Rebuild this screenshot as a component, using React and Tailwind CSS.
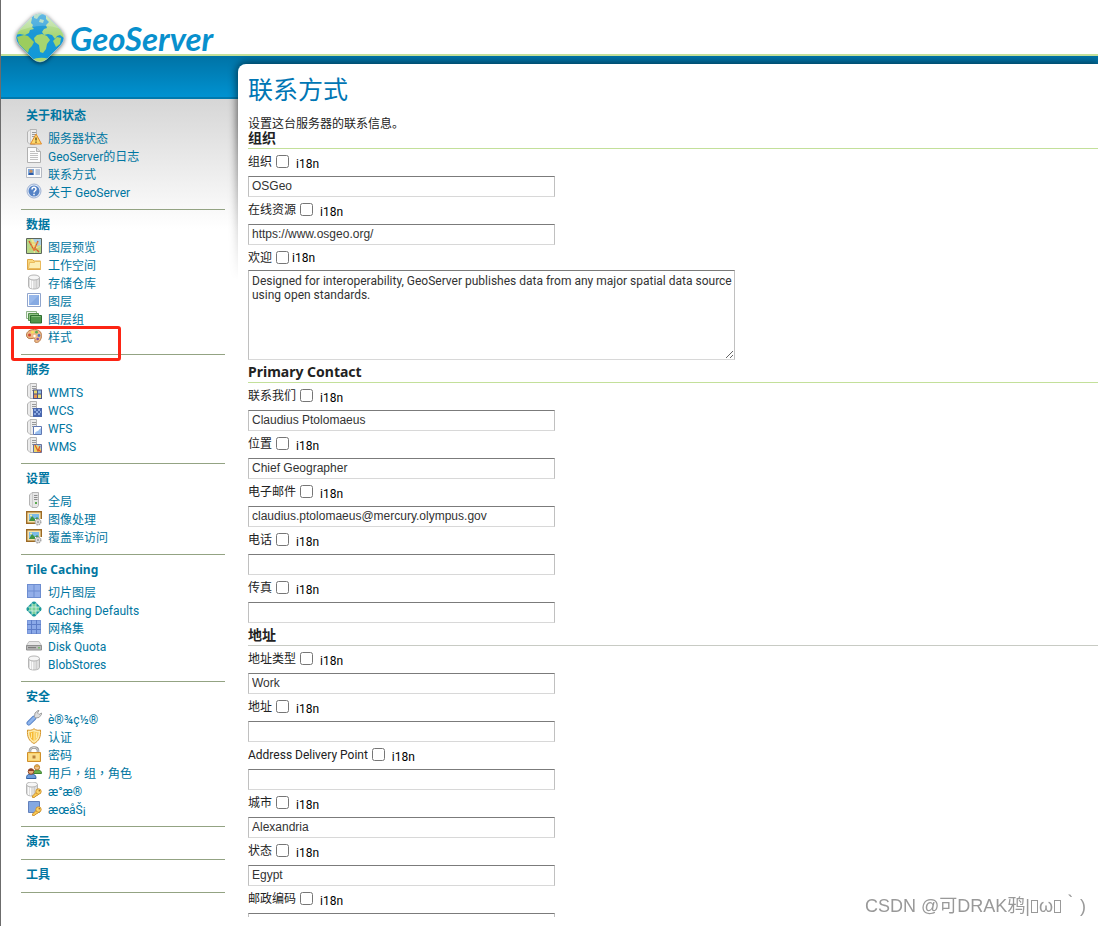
import React, { useState } from 'react';

const MENU = [
  {
    title: '关于和状态',
    items: [
      { label: '服务器状态', icon: 'serverWarn' },
      { label: 'GeoServer的日志', icon: 'page' },
      { label: '联系方式', icon: 'vcard' },
      { label: '关于 GeoServer', icon: 'help' },
    ],
  },
  {
    title: '数据',
    items: [
      { label: '图层预览', icon: 'map' },
      { label: '工作空间', icon: 'folder' },
      { label: '存储仓库', icon: 'database' },
      { label: '图层', icon: 'layer' },
      { label: '图层组', icon: 'layers' },
      { label: '样式', icon: 'palette', marked: true },
    ],
  },
  {
    title: '服务',
    items: [
      { label: 'WMTS', icon: 'wmts' },
      { label: 'WCS', icon: 'wcs' },
      { label: 'WFS', icon: 'wfs' },
      { label: 'WMS', icon: 'wms' },
    ],
  },
  {
    title: '设置',
    items: [
      { label: '全局', icon: 'server' },
      { label: '图像处理', icon: 'picture' },
      { label: '覆盖率访问', icon: 'picture' },
    ],
  },
  {
    title: 'Tile Caching',
    items: [
      { label: '切片图层', icon: 'tiles' },
      { label: 'Caching Defaults', icon: 'globe' },
      { label: '网格集', icon: 'grid' },
      { label: 'Disk Quota', icon: 'drive' },
      { label: 'BlobStores', icon: 'database' },
    ],
  },
  {
    title: '安全',
    items: [
      { label: 'è®¾ç½®', icon: 'wrench' },
      { label: '认证', icon: 'shield' },
      { label: '密码', icon: 'lock' },
      { label: '用户，组，角色', icon: 'users', lang: 'zh-TW' },
      { label: 'æ°æ®', icon: 'databaseKey' },
      { label: 'æœåŠ¡', icon: 'layerKey' },
    ],
  },
  { title: '演示', items: [] },
  { title: '工具', items: [] },
];

const SECTIONS = [
  {
    title: '组织',
    fields: [
      { name: 'organization', label: '组织', value: 'OSGeo' },
      { name: 'onlineResource', label: '在线资源', value: 'https://www.osgeo.org/' },
      {
        name: 'welcome',
        label: '欢迎',
        multiline: true,
        value:
          'Designed for interoperability, GeoServer publishes data from any major spatial data source using open standards.',
      },
    ],
  },
  {
    title: 'Primary Contact',
    fields: [
      { name: 'person', label: '联系我们', value: 'Claudius Ptolomaeus' },
      { name: 'position', label: '位置', value: 'Chief Geographer' },
      { name: 'email', label: '电子邮件', value: 'claudius.ptolomaeus@mercury.olympus.gov' },
      { name: 'phone', label: '电话', value: '' },
      { name: 'fax', label: '传真', value: '' },
    ],
  },
  {
    title: '地址',
    plain: true,
    fields: [
      { name: 'addressType', label: '地址类型', value: 'Work' },
      { name: 'address', label: '地址', value: '' },
      { name: 'deliveryPoint', label: 'Address Delivery Point', value: '' },
      { name: 'city', label: '城市', value: 'Alexandria' },
      { name: 'state', label: '状态', value: 'Egypt' },
      { name: 'zip', label: '邮政编码', value: '' },
    ],
  },
];

const serverBody = (
  <>
    <path d="M1.500 3 4 .5h6.500v13L9 15.500H4L1.500 13z" fill="#ececec" stroke="#b4b4b4" />
    <path d="M4.500 1v14" stroke="#cfcfcf" />
    <path d="M6 3.500h4M6 5.500h4M6 7.500h4" stroke="#9a9a9a" />
  </>
);

const cylinder = (
  <>
    <path d="M2.500 3.500v9c0 1.200 2.200 2.500 5.500 2.500s5.500-1.300 5.500-2.500v-9z" fill="#dedede" stroke="#b5b5b5" />
    <path d="M4.500 6v8M6.500 6.500v8" stroke="#fafafa" />
    <path d="M10.500 6v8" stroke="#cdcdcd" />
    <ellipse cx="8" cy="3.500" rx="5.500" ry="2.500" fill="#f6f6f6" stroke="#b5b5b5" />
  </>
);

const key = (
  <>
    <path d="m10.500 10-4 4v1.500h2l.5-1h1l.5-1h1l1.500-1.500" fill="#f8c955" stroke="#c88620" strokeWidth=".8" />
    <circle cx="12.500" cy="9.500" r="2.700" fill="#fbd36a" stroke="#c88620" strokeWidth=".8" />
    <circle cx="13.300" cy="8.700" r=".8" fill="#9c651a" />
  </>
);

const ICONS = {
  server: (
    <>
      <path d="M3.500 3 6 .5h6.500v13L11 15.500H6L3.500 13z" fill="#e6e6e6" stroke="#b4b4b4" />
      <path d="M6.500 1v14" stroke="#cccccc" />
      <path d="M8 3.500h3.500M8 5.500h3.500M8 7.500h3.500" stroke="#8b8b8b" />
      <path d="M9 10h2v2H9z" fill="#58a94e" />
    </>
  ),
  serverWarn: (
    <>
      {serverBody}
      <path d="m10 5 5.500 10h-11z" fill="#fdd86b" stroke="#e08a2c" strokeLinejoin="round" />
      <path d="M10 8.500v3M10 12.500v1.200" stroke="#5b4210" strokeWidth="1.300" />
    </>
  ),
  page: (
    <>
      <path d="M1.500.5h9l4 4v11h-13z" fill="#fcfcfc" stroke="#b0b0b0" />
      <path d="M10.500.5v4h4" fill="#e2e2e2" stroke="#b0b0b0" />
      <path d="M4 4.500h5M4 6.500h8M4 8.500h8M4 10.500h8M4 12.500h8" stroke="#c0c0c0" />
    </>
  ),
  vcard: (
    <>
      <path d="M.5 2.500h15v10H.5z" fill="#fbfbfb" stroke="#b5b9c2" />
      <path d="M2 4h6v6H2z" fill="#7fa9dd" />
      <path d="M2.500 10c0-2 1.200-2.500 2.500-2.500S7.500 8 7.500 10z" fill="#2d5ca8" />
      <circle cx="5" cy="6.200" r="1.600" fill="#c98f5c" />
      <path d="M9.500 5h4.500M9.500 7h4.500M9.500 9h4.500" stroke="#7690bb" />
    </>
  ),
  help: (
    <>
      <circle cx="8" cy="8" r="7" fill="#dfe8f6" stroke="#9fb2d3" />
      <circle cx="8" cy="8" r="5.500" fill="#5583c6" />
      <path d="M6 6.500C6 3.500 10.200 3.700 10 6.300 9.900 7.800 8 7.800 8 9.500M8 10.700v1.500" fill="none" stroke="#fff" strokeWidth="1.500" />
    </>
  ),
  map: (
    <>
      <path d="M1 1h14v14H1z" fill="#efe393" />
      <path d="M7 1h8v6l-4 2z" fill="#a8cee4" />
      <path d="M1 1h4l3 14H1zM9 11l6-3v7H9z" fill="#b7d888" />
      <path d="m3 3 5 9 2-1 3 3M8 12l4-9" fill="none" stroke="#d9532b" strokeWidth="1.400" />
      <path d="M4 5h9M5 8h9M3 11h11" stroke="#e9c34b" strokeWidth=".7" />
      <path d="M.5.5h15v15H.5z" fill="none" stroke="#5d665b" />
    </>
  ),
  folder: (
    <>
      <path d="M1.500 13.500v-10h5l1.500 1.500h6.500v8.500z" fill="#f9d77d" stroke="#dfa745" />
      <path d="M3.500 6.500h5l1-1h5v7h-12z" fill="#fdeeb3" stroke="#eabb5e" />
    </>
  ),
  database: cylinder,
  layer: (
    <>
      <path d="M1.500 1.500h13v13h-13z" fill="#fff" stroke="#91a5cc" />
      <path d="M3 3h10v10H3z" fill="#86aae2" />
      <path d="M3 13V3h10z" fill="#98b8ea" />
    </>
  ),
  layers: (
    <>
      <path d="M.5 1.500h10v7H.5z" fill="#eef5ec" stroke="#8fb388" />
      <path d="M2.500 3.500h10v7h-10z" fill="#8fc283" stroke="#558f4b" />
      <path d="M4.500 5.500h11v7.500h-11z" fill="#51964b" stroke="#2f6f31" />
      <path d="M5.500 6.500h9" stroke="#86bd79" />
    </>
  ),
  palette: (
    <>
      <path d="M.5 7C.5 3.500 4 1.500 8.500 1.500s7 2.500 7 6-2 7-5 7c-2 0-2-1.500-1.500-2.500.5-1.500-1-2-3-1.500C3 11.200.5 10 .5 7z" fill="#edb987" stroke="#b87a4a" />
      <circle cx="3.500" cy="7" r="1.500" fill="#d24a32" />
      <circle cx="6.500" cy="4.200" r="1.400" fill="#f4e25a" />
      <circle cx="10.500" cy="4.200" r="1.400" fill="#5cae4e" />
      <circle cx="13" cy="7.500" r="1.400" fill="#4c79c8" />
      <circle cx="8.500" cy="8" r="1.200" fill="#fff" />
      <circle cx="11.700" cy="11" r="1.300" fill="#8452a6" />
    </>
  ),
  wmts: (
    <>
      {serverBody}
      <path d="M7 6.500h9V16H7z" fill="#4b5488" />
      <path d="M8 7.500h3v3H8z" fill="#e9d66a" />
      <path d="M12 7.500h3v3h-3z" fill="#8fbde4" />
      <path d="M8 11.500h3V15H8z" fill="#e39252" />
      <path d="M12 11.500h3V15h-3z" fill="#e8dd77" />
    </>
  ),
  wcs: (
    <>
      {serverBody}
      <path d="M7 7h9v9H7z" fill="#4a67ae" />
      <path d="M8 8h2v2H8zM12 8h2v2h-2zM10 10h2v2h-2zM14 10h1v2h-1zM8 12h2v2H8zM12 12h2v2h-2z" fill="#8ba9e0" />
    </>
  ),
  wfs: (
    <>
      {serverBody}
      <path d="M7.500 7.500h8v8h-8z" fill="#fff" stroke="#6079b4" />
      <path d="M9 15c0-3 3-2.500 4-4 .5-1 1-1.500 2-1.500V15z" fill="#9cc0ee" />
    </>
  ),
  wms: (
    <>
      {serverBody}
      <path d="M7.500 7.500h8v8h-8z" fill="#ecd768" stroke="#68719c" />
      <path d="M11 8h4v4z" fill="#9cc9e8" />
      <path d="m9 8 3 6 2-5M13 13l2 2" fill="none" stroke="#dc5b2b" strokeWidth="1.200" />
    </>
  ),
  picture: (
    <>
      <path d="M.7 1.700h14.600v11.600H.7z" fill="#f7e2ab" stroke="#9c6a25" strokeWidth="1.400" />
      <path d="M3 4h10v7H3z" fill="#7dbbe8" />
      <path d="m3 11 3-5 3 3 2-2 2 2v2z" fill="#3f9443" />
      <circle cx="5" cy="5.500" r="1" fill="#fff3a0" />
      <path d="M9 9h7v7H9z" fill="#fff" />
      <circle cx="12" cy="12" r="2.800" fill="#e3e3e3" stroke="#a5a5a5" strokeWidth="1.400" strokeDasharray="1.500 .7" />
      <circle cx="12" cy="12" r="1" fill="#999" />
    </>
  ),
  tiles: (
    <>
      <path d="M1 1h14v14H1z" fill="#6d8dd0" />
      <path d="M2 2h5.500v5.500H2zM8.500 2H14v5.500H8.500zM2 8.500h5.500V14H2zM8.500 8.500H14V14H8.500z" fill="#93afe9" />
    </>
  ),
  globe: (
    <>
      <path d="M6.700.8Q8 0 9.300.8l5.900 5.900q.8 1.300 0 2.600l-5.900 5.900q-1.300.8-2.600 0L.8 9.300Q0 8 .8 6.700z" fill="#1c9a9a" />
      <path d="M6 3h4v3h3v4h-3v3H6v-3H3V6h3z" fill="#7bd19b" />
      <path d="M6 2v12M10 2v12M2 6h12M2 10h12" stroke="#d5f3ea" strokeWidth=".8" />
    </>
  ),
  grid: (
    <>
      <path d="M1 1h14v14H1z" fill="#8ba9e8" />
      <path d="M1.500 1.500h13v13h-13z" fill="none" stroke="#7895d8" />
      <path d="M5.500 1v14M10.500 1v14M1 5.500h14M1 10.500h14" stroke="#5d7dc8" />
    </>
  ),
  drive: (
    <>
      <path d="m3 4.500-2.500 4h15L13 4.500z" fill="#e7e7e7" stroke="#c0c0c0" />
      <path d="M.5 8.500h15v4.500H.5z" fill="#b9b9b9" stroke="#8f8f8f" />
      <path d="M2 10.700h8" stroke="#6e6e6e" />
      <path d="M12 10.700h2" stroke="#75b96a" strokeWidth="1.400" />
    </>
  ),
  wrench: (
    <>
      <path d="M2.800 13.200 8 8" stroke="#5480c6" strokeWidth="4.600" strokeLinecap="round" />
      <path d="M2.800 13.200 8 8" stroke="#8fb5ec" strokeWidth="2.800" strokeLinecap="round" />
      <path d="m8.500 6.500.5-3.500 3-2.500h1l-1.500 2.500 1.500 1.500L15.500 3v1.500L13 7.500l-3.500.5z" fill="#dedede" stroke="#a0a0a0" />
    </>
  ),
  shield: (
    <>
      <path d="M8 .7C6 2.500 3.500 2.500 1.500 2 1 9 3 13 8 15.500 13 13 15 9 14.500 2 12.500 2.500 10 2.500 8 .7z" fill="#fdebae" stroke="#d6962d" />
      <path d="M8 3C6.500 4 5 4.300 3.300 4.200 3.300 8.500 5 11.500 8 13.300z" fill="#f6b832" />
      <path d="M8 3c1.500 1 3 1.300 4.700 1.200 0 4.300-1.700 7.300-4.700 9.100z" fill="#f9ce60" />
      <path d="M8 3v10M5.500 5v5M10.500 5v5" stroke="#fff0b7" strokeWidth=".8" />
    </>
  ),
  lock: (
    <>
      <path d="M4 7V4.500C4 .5 12 .5 12 4.500V7" fill="none" stroke="#969696" strokeWidth="2.600" />
      <path d="M4 7V4.500C4 .5 12 .5 12 4.500V7" fill="none" stroke="#dadada" />
      <path d="M1.500 6.500h13v9h-13z" fill="#fbd36c" stroke="#cf8f2c" />
      <path d="M3 9h10M3 11h10M3 13h10" stroke="#fbe9ae" />
      <path d="M6.500 9.500h3v3h-3z" fill="#b9823a" />
    </>
  ),
  users: (
    <>
      <path d="M7.500 9.500C7.500 6.500 9 6 11.500 6s4 1 4 3.500z" fill="#69b14c" stroke="#3f8430" />
      <circle cx="11" cy="3.300" r="2.600" fill="#f0c28a" stroke="#b77a37" />
      <path d="M8.500 3C9 .3 13 .3 13.600 3z" fill="#dba646" />
      <path d="M.5 14.500c0-3.500 1.500-4.500 4.500-4.500s5 1 5 4.500z" fill="#6d9fe0" stroke="#315f9f" />
      <circle cx="5" cy="7.500" r="2.800" fill="#e9ad7b" stroke="#8f4a2b" />
      <path d="M2.200 7C2.500 4 7.500 4 7.900 7z" fill="#8d3d25" />
    </>
  ),
  databaseKey: (
    <>
      <g transform="translate(-2 -1)">{cylinder}</g>
      {key}
    </>
  ),
  layerKey: (
    <>
      <path d="M2.500 1.500h11v11h-11z" fill="#84a8e2" stroke="#6280bb" />
      {key}
    </>
  ),
};

function Icon({ name }) {
  return (
    <svg className="mb-1 h-4 w-4 shrink-0" viewBox="0 0 16 16" fill="none" aria-hidden="true">
      {ICONS[name]}
    </svg>
  );
}

function LogoMark() {
  return (
    <svg className="h-[54px] w-[54px] shrink-0 drop-shadow-[0_1px_2px_rgba(0,0,0,0.6)]" viewBox="0 0 54 54" aria-hidden="true">
      <defs>
        <linearGradient id="sea" x1="0" y1="0" x2="0" y2="1">
          <stop offset="0" stopColor="#3fa9dc" />
          <stop offset="0.4" stopColor="#1b97d6" />
          <stop offset="1" stopColor="#0f9ad8" />
        </linearGradient>
        <linearGradient id="land" x1="0" y1="0" x2="0" y2="1">
          <stop offset="0" stopColor="#c3e3b4" />
          <stop offset="1" stopColor="#a3d56c" />
        </linearGradient>
        <clipPath id="diamond">
          <path d="M20 5q7-5 14 0l14 14q6 8 0 15L34 48q-7 6-14 0L6 34q-6-7 0-15z" />
        </clipPath>
      </defs>
      <g clipPath="url(#diamond)">
        <path d="M0 0h54v54H0z" fill="url(#sea)" />
        <path d="M2 24 16 6l3 1-1 5 2 2-1 2 2 2-4 1-1 3-4 2-5-1z" fill="url(#land)" />
        <path d="m4 26 7-2 4 1 3 3 3 3-2 4-3 3-1 4-9-9z" fill="#9ccd5e" />
        <path d="m21 3 5-2 3 2-3 2-2 3-3-1zM27 8l4 1-1 3-4-1z" fill="#a9d9bd" />
        <path d="m33 4 18 18v5l-4-3-3 1-2 3-3-4-4-1-4 1-2-3 2-3 3-1-1-3 3-3-3-3z" fill="url(#land)" />
        <path d="m21 27 3-3 5-1 5 2 3 4-3 4-1 5-3 4-3-1-1-7-4-3z" fill="#a5d570" />
        <path d="m40 30 4-4 4 1-1 6-4 3z" fill="#a3d56c" />
        <path d="M18 49q9-4 18-1l-8 8z" fill="#a8d86f" />
        <path d="M2 22 20 4q7-5 14 0l14 14Q26 10 2 22z" fill="#fff" opacity=".2" />
      </g>
      <path
        d="M20 5q7-5 14 0l14 14q6 8 0 15L34 48q-7 6-14 0L6 34q-6-7 0-15z"
        fill="none"
        stroke="#fff"
        strokeOpacity=".35"
      />
    </svg>
  );
}

function MenuGroup({ group }) {
  return (
    <section className="ml-5 mr-[13px] border-b border-[#93a383] pb-2 pl-[5px] pt-[5px]">
      <h2 className="mb-px h-[18px] font-['Noto_Sans','Noto_Sans_CJK_SC',sans-serif] text-[12px] font-bold leading-5 text-[#0076a1]">
        {group.title}
      </h2>
      {group.items.length > 0 && (
        <ul className="pt-1">
          {group.items.map((item) => (
            <li key={item.label} className="relative h-[18px]">
              <a
                href="#"
                lang={item.lang}
                className="flex items-center gap-1.5 text-[12px] leading-[18px] text-[#0076a1]"
              >
                <Icon name={item.icon} />
                {item.label}
              </a>
              {item.marked && (
                <span className="pointer-events-none absolute -left-[15px] -top-0.5 h-[35px] w-[110px] rounded-[3px] border-3 border-[#fc2414]" />
              )}
            </li>
          ))}
        </ul>
      )}
    </section>
  );
}

function Field({ field }) {
  const [value, setValue] = useState(field.value);
  const [i18n, setI18n] = useState(false);
  const control =
    'block border border-t-[#7b7b7b] border-l-[#c0c0c0] border-r-[#c0c0c0] border-b-[#d8d8d8] bg-white pl-[3px] text-[12px] text-[#333]';

  return (
    <div>
      <div className={field.multiline ? 'flex h-[25px] items-center' : 'flex h-[27px] items-center pb-0.5'}>
        <label htmlFor={field.name}>{field.label}</label>
        <input
          id={`${field.name}-i18n`}
          type="checkbox"
          className="ml-1 h-[13px] w-[13px]"
          checked={i18n}
          onChange={(event) => setI18n(event.target.checked)}
        />
        <label
          htmlFor={`${field.name}-i18n`}
          className={field.multiline ? 'ml-[3px] text-black' : 'ml-[7px] pt-1 text-black'}
        >
          i18n
        </label>
      </div>
      {field.multiline ? (
        <textarea
          id={field.name}
          className={`${control} h-[90px] w-[487px] py-[3px] leading-[14px]`}
          value={value}
          onChange={(event) => setValue(event.target.value)}
        />
      ) : (
        <input
          id={field.name}
          type="text"
          className={`${control} h-[21px] w-[307px] pb-px font-['Liberation_Sans',sans-serif]`}
          value={value}
          onChange={(event) => setValue(event.target.value)}
        />
      )}
    </div>
  );
}

export default function App() {
  return (
    <div className="flex h-screen flex-col overflow-hidden border-l border-[#6c6c6c] bg-white pb-[9px] font-['Roboto','Noto_Sans_CJK_SC',sans-serif] text-[12px] leading-4 text-[#222]">
      <header className="h-14 shrink-0 border-b-2 border-[#c3e09a]">
        <a href="#" className="relative z-10 flex w-fit items-center pl-3 pt-[11px]">
          <LogoMark />
          <span className="ml-[3px] font-['Lato',sans-serif] text-[33px] font-bold italic leading-[52px] text-[#0890cd]">
            GeoServer
          </span>
        </a>
      </header>

      <div className="flex min-h-0 flex-1 bg-[linear-gradient(#0073a6,#0093d2)] bg-[length:100%_42px] bg-no-repeat">
        <nav className="w-[237px] shrink-0 pt-[41px]">
          <div className="border-t-2 border-[#0079ad] bg-[linear-gradient(#d6d6d6,#fff_130px)] pt-0.5">
            {MENU.map((group) => (
              <MenuGroup key={group.title} group={group} />
            ))}
          </div>
        </nav>

        <main className="relative mt-2 min-w-0 flex-1">
          {/* panel shadow, fades out down the left edge */}
          <div className="pointer-events-none absolute -left-3 -top-2 right-0 h-56 overflow-hidden pl-3 pt-2 [mask-image:linear-gradient(#000_30%,transparent)]">
            <div className="h-80 rounded-tl-lg shadow-[0_0_8px_1px_rgba(0,0,0,0.6)]" />
          </div>
          <div className="relative h-full overflow-hidden rounded-tl-lg bg-white pl-2.5 pt-2.5">
            <h1 className="text-[25px] leading-[34px] text-[#0076b4]">联系方式</h1>
            <p className="mt-[9px] leading-[14px]">设置这台服务器的联系信息。</p>
            <form className="flex flex-col gap-[5px]">
              {SECTIONS.map((section) => (
                <section key={section.title}>
                  <h2
                    className={`h-[18px] border-b font-['Noto_Sans','Noto_Sans_CJK_SC',sans-serif] text-[14px] font-bold leading-[14px] ${section.plain ? 'border-[#c8cbc4]' : 'border-[#c3e09a]'}`}
                  >
                    {section.title}
                  </h2>
                  {section.fields.map((field) => (
                    <Field key={field.name} field={field} />
                  ))}
                </section>
              ))}
            </form>
          </div>
        </main>
      </div>

      <div className="pointer-events-none fixed bottom-2 right-3 flex items-center font-['Liberation_Sans','Noto_Sans_CJK_SC',sans-serif] text-[18px] leading-6 text-[#999]">
        CSDN @可DRAK鸦|
        <span className="mx-px h-[13px] w-[7px] border border-[#999]" />
        ω
        <span className="mx-px h-[13px] w-[7px] border border-[#999]" />
        ｀)
      </div>
    </div>
  );
}
